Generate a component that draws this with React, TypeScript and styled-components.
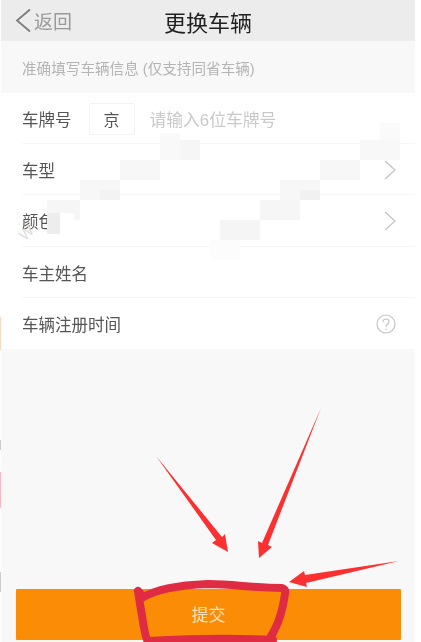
import React from 'react'
import styled, { createGlobalStyle } from 'styled-components'

const GlobalStyle = createGlobalStyle`
  html, body {
    margin: 0;
    padding: 0;
    background: #fff;
  }
  body {
    font-family: "Liberation Sans", "Noto Sans CJK SC", sans-serif;
  }
`

const Page = styled.div`
  position: relative;
  width: 421px;
  height: 642px;
  overflow: hidden;
  background: #fff;
`

const Screen = styled.div`
  display: flex;
  flex-direction: column;
  width: 414px;
  height: 642px;
  margin-left: 1px;
  background: #f8f8f8;
  filter: blur(0.6px);
`

const NavBar = styled.header`
  display: grid;
  grid-template-columns: 1fr auto 1fr;
  align-items: center;
  height: 41px;
  background: #ececec;
`

const BackLink = styled.div`
  display: flex;
  align-items: center;
  gap: 3px;
  padding-left: 14px;
  font-size: 19px;
  color: #9a9a9a;
`

const Title = styled.h1`
  margin: 0;
  font-size: 22px;
  font-weight: 400;
  color: #222;
`

const Hint = styled.div`
  display: flex;
  align-items: center;
  height: 52px;
  padding-left: 21px;
  font-size: 14.6px;
  color: #b4b4b4;
`

const List = styled.section`
  background: #fff;
`

const Row = styled.div<{ $last?: boolean }>`
  display: flex;
  align-items: center;
  height: 51.2px;
  margin-left: 21px;
  padding: 2px 19px 0 0;
  border-bottom: ${p => (p.$last ? 'none' : '1px solid #f6f6f6')};
  box-sizing: border-box;
`

const Label = styled.span`
  font-size: 16.5px;
  color: #555;
`

const Province = styled.div`
  display: flex;
  align-items: center;
  justify-content: center;
  width: 44px;
  height: 30px;
  margin-left: 17px;
  border: 1px solid #f3f3f3;
  border-radius: 2px;
  font-size: 16px;
  color: #555;
`

const Placeholder = styled.span`
  margin-left: 15px;
  font-size: 16.8px;
  color: #c9c9c9;
`

const RowIcon = styled.svg`
  margin-left: auto;
  flex: none;
`

const Filler = styled.div`
  flex: 1;
`

const Submit = styled.button`
  display: block;
  height: 51px;
  margin: 0 14px 2px 15px;
  padding: 0 0 2px;
  border: none;
  border-radius: 1px;
  background: #fb8c05;
  font: inherit;
  font-size: 17px;
  color: #f6e3bd;
`

const Overlay = styled.svg`
  position: absolute;
  top: 0;
  left: 0;
  pointer-events: none;
`

const Mosaic = styled.g`
  filter: blur(0.7px);
`

const Watermark = styled.span`
  position: absolute;
  top: 224px;
  left: 19px;
  font-size: 15px;
  color: #ddd;
  transform: rotate(-42deg);
`

const Chevron = () => (
  <RowIcon width="12" height="20" viewBox="0 0 12 20" fill="none">
    <path d="M1 1l10 9-10 9" stroke="#c4c4c4" strokeWidth="1.3" />
  </RowIcon>
)

const mosaic: [number, number, number, number, string][] = [
  [180, 140, 20, 20, '#f6f6f6'],
  [160, 133, 20, 27, '#f9f9f9'],
  [120, 160, 40, 20, '#f7f7f7'],
  [80, 180, 40, 20, '#f7f7f7'],
  [100, 190, 20, 10, '#f3f3f3'],
  [47, 200, 33, 20, '#f6f6f6'],
  [47, 213, 13, 21, '#ededed'],
  [60, 213, 14, 21, '#fff'],
  [380, 123, 20, 17, '#fafafa'],
  [360, 140, 40, 20, '#f8f8f8'],
  [320, 160, 40, 20, '#f7f7f7'],
  [280, 180, 40, 20, '#f7f7f7'],
  [300, 190, 20, 10, '#f1f1f1'],
  [260, 200, 40, 20, '#f6f6f6'],
  [220, 220, 40, 20, '#f5f5f5'],
  [210, 240, 30, 20, '#fcfcfc'],
]

const App: React.FC = () => {
  return (
    <Page>
      <GlobalStyle />
      <Screen>
        <NavBar>
          <BackLink>
            <svg width="16" height="25" viewBox="0 0 16 25" fill="none">
              <path d="M15 1.5L2 12.5l13 11" stroke="#7c7c7c" strokeWidth="1.8" />
            </svg>
            返回
          </BackLink>
          <Title>更换车辆</Title>
        </NavBar>
        <Hint>准确填写车辆信息 (仅支持同省车辆)</Hint>
        <List>
          <Row>
            <Label>车牌号</Label>
            <Province>京</Province>
            <Placeholder>请输入6位车牌号</Placeholder>
          </Row>
          <Row>
            <Label>车型</Label>
            <Chevron />
          </Row>
          <Row>
            <Label>颜色</Label>
            <Chevron />
          </Row>
          <Row>
            <Label>车主姓名</Label>
          </Row>
          <Row $last>
            <Label>车辆注册时间</Label>
            <RowIcon width="20" height="20" viewBox="0 0 20 20" fill="none">
              <circle cx="10" cy="10" r="9" stroke="#c4c4c4" strokeWidth="1.2" />
              <path d="M7 8c0-4 6-4 6 0 0 2-3 2-3 5" stroke="#c4c4c4" strokeWidth="1.2" />
              <circle cx="10" cy="15.2" r="0.8" fill="#c4c4c4" />
            </RowIcon>
          </Row>
        </List>
        <Filler />
        <Submit>提交</Submit>
      </Screen>
      <Overlay width="421" height="642" viewBox="0 0 421 642" fill="none">
        <Mosaic>
          {mosaic.map(([x, y, w, h, c]) => (
            <rect key={`${x}-${y}`} x={x} y={y} width={w} height={h} fill={c} />
          ))}
        </Mosaic>
        <rect x="0" y="317" width="1" height="33" fill="#fbd9c0" />
        <rect x="0" y="440" width="1" height="10" fill="#ccc" />
        <rect x="0" y="472" width="1" height="36" fill="#f7b8c4" />
        <rect x="0" y="572" width="1" height="20" fill="#ccc" />
        <path d="M156 456L222 537l3-3 3 18-16-9 4-3z" fill="#fb3030" />
        <path d="M321 408L268 545l4 2-13 11-1-17 4 2z" fill="#fb3030" />
        <path d="M399 561L305 575l-1-4-15 11 18 5-1-4z" fill="#fb3030" />
        <path
          d="M138 591c2 14 4 24 6 37 1 6 2 10 4 14M142 598c14-9 40-13 66-14 26 0 44 4 74 4 3 1 4 2 3 6-2 14-5 26-11 37l-5 9M149 641c36-2 84-3 124-1M138 591l5 5"
          stroke="#e02c42"
          strokeWidth="8"
          strokeLinecap="round"
          strokeLinejoin="round"
        />
      </Overlay>
      <Watermark>W</Watermark>
    </Page>
  )
}

export default App
